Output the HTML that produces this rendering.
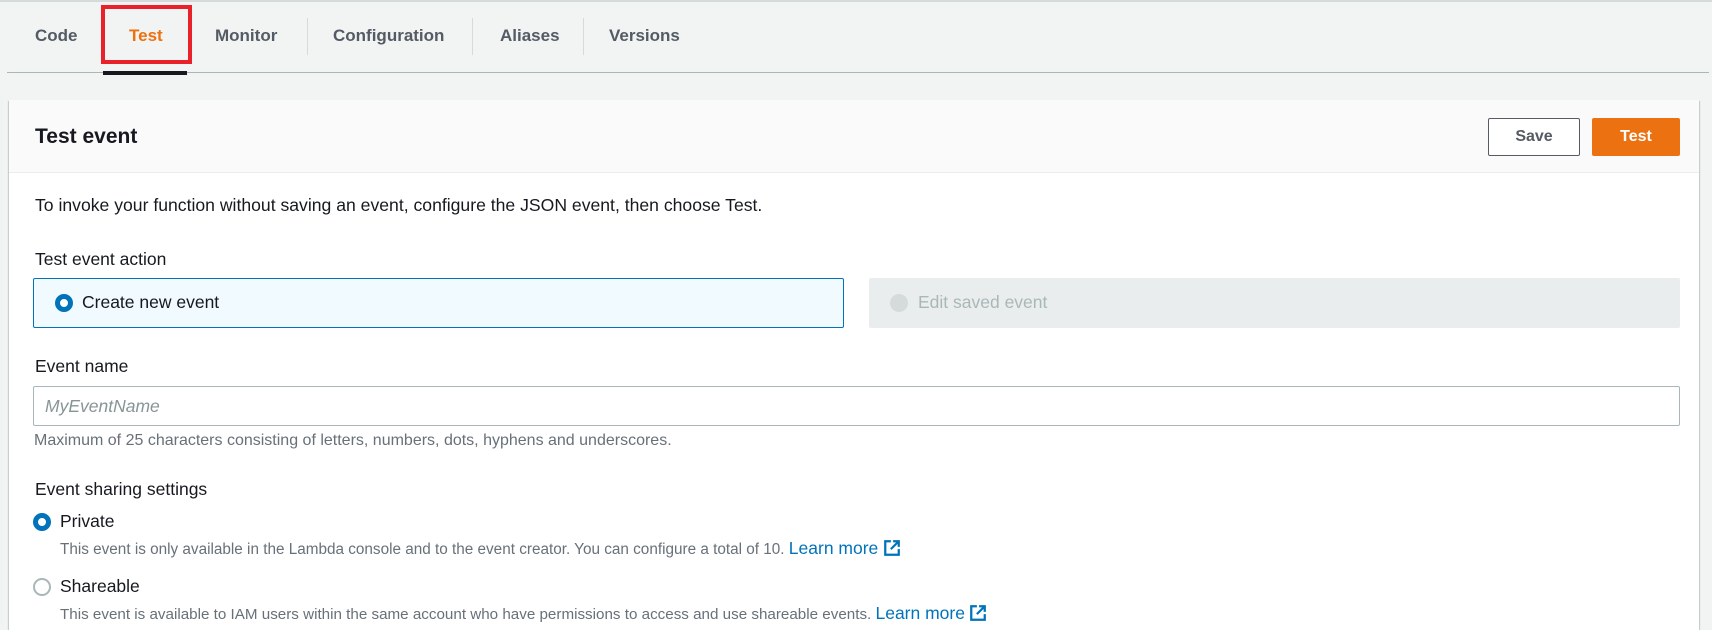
<!DOCTYPE html>
<html><head><style>
*{margin:0;padding:0;box-sizing:border-box}
body{width:1712px;height:620px;overflow:hidden;background:#f2f3f3;font-family:"Liberation Sans",sans-serif;color:#16191f;position:relative}
.a{position:absolute;white-space:nowrap}
.tab{font-size:17px;font-weight:bold;color:#545b64;top:26px}
.sep{position:absolute;width:1px;background:#d5dbdb;top:18px;height:37px}
.radio{position:absolute;width:18px;height:18px;border-radius:50%}
.on{border:5px solid #0073bb;background:#fff}
.off{border:2px solid #aab7b8;background:#fff}
.lm{color:#0073bb;font-size:17.5px}
</style></head><body>
<div class="a" style="left:0;top:0;width:1712px;height:2px;background:#d5dbdb"></div>
<div class="a tab" style="left:35px">Code</div>
<div class="a tab" style="left:129px;color:#ec7211">Test</div>
<div class="a tab" style="left:215px">Monitor</div>
<div class="sep" style="left:307px"></div>
<div class="a tab" style="left:333px">Configuration</div>
<div class="sep" style="left:472px"></div>
<div class="a tab" style="left:500px">Aliases</div>
<div class="sep" style="left:583px"></div>
<div class="a tab" style="left:609px">Versions</div>
<div class="a" style="left:101px;top:5px;width:91px;height:59px;border:4px solid #e8212b"></div>
<div class="a" style="left:7px;top:72px;width:1702px;height:1px;background:#aab7b8"></div>
<div class="a" style="left:103px;top:71px;width:84px;height:4px;background:#16191f"></div>

<div class="a" style="left:9px;top:100px;width:1690px;height:530px;background:#fff;box-shadow:0 1px 1px rgba(0,28,36,.3),1px 1px 1px rgba(0,28,36,.15),-1px 1px 1px rgba(0,28,36,.15)"></div>
<div class="a" style="left:9px;top:100px;width:1690px;height:73px;background:#fafafa;border-bottom:1px solid #eaeded"></div>
<div class="a" style="left:35px;top:125px;font-size:21px;font-weight:bold">Test event</div>
<div class="a" style="left:1488px;top:118px;width:92px;height:38px;border:1px solid #545b64;border-radius:2px;background:#fff;font-size:16px;font-weight:bold;color:#545b64;text-align:center;line-height:36px">Save</div>
<div class="a" style="left:1592px;top:118px;width:88px;height:38px;border-radius:2px;background:#ec7211;font-size:16px;font-weight:bold;color:#fff;text-align:center;line-height:38px">Test</div>

<div class="a" style="left:35px;top:195px;font-size:17.6px">To invoke your function without saving an event, configure the JSON event, then choose Test.</div>
<div class="a" style="left:35px;top:249px;font-size:17.5px">Test event action</div>
<div class="a" style="left:33px;top:278px;width:811px;height:50px;background:#f1faff;border:1px solid #0073bb;border-radius:2px"></div>
<div class="radio on" style="left:55px;top:294px"></div>
<div class="a" style="left:82px;top:292px;font-size:17.5px">Create new event</div>
<div class="a" style="left:869px;top:278px;width:811px;height:50px;background:#eaeded;border-radius:2px"></div>
<div class="radio" style="left:890px;top:294px;background:#d5dbdb"></div>
<div class="a" style="left:918px;top:292px;font-size:17.5px;color:#aab7b8">Edit saved event</div>

<div class="a" style="left:35px;top:356px;font-size:17.5px">Event name</div>
<div class="a" style="left:33px;top:386px;width:1647px;height:40px;border:1px solid #aab7b8;border-radius:2px;background:#fff"></div>
<div class="a" style="left:45px;top:396px;font-size:17.5px;font-style:italic;color:#879596">MyEventName</div>
<div class="a" style="left:34px;top:432px;font-size:16px;color:#687078">Maximum of 25 characters consisting of letters, numbers, dots, hyphens and underscores.</div>

<div class="a" style="left:35px;top:479px;font-size:17.5px">Event sharing settings</div>
<div class="radio on" style="left:33px;top:513px"></div>
<div class="a" style="left:60px;top:511px;font-size:17.5px">Private</div>
<div class="a" style="left:60px;top:538px;font-size:15.3px;color:#687078">This event is only available in the Lambda console and to the event creator. You can configure a total of 10. <span class="lm">Learn more</span> <svg width="18" height="18" viewBox="0 0 16 16" style="vertical-align:-3px"><path d="M7 2H2v12h12V9" fill="none" stroke="#0073bb" stroke-width="2"/><path d="M9 2h5v5M14 2L7 9" fill="none" stroke="#0073bb" stroke-width="2"/></svg></div>
<div class="radio off" style="left:33px;top:578px"></div>
<div class="a" style="left:60px;top:576px;font-size:17.5px">Shareable</div>
<div class="a" style="left:60px;top:603px;font-size:15.2px;color:#687078">This event is available to IAM users within the same account who have permissions to access and use shareable events. <span class="lm">Learn more</span> <svg width="18" height="18" viewBox="0 0 16 16" style="vertical-align:-3px"><path d="M7 2H2v12h12V9" fill="none" stroke="#0073bb" stroke-width="2"/><path d="M9 2h5v5M14 2L7 9" fill="none" stroke="#0073bb" stroke-width="2"/></svg></div>
</body></html>
